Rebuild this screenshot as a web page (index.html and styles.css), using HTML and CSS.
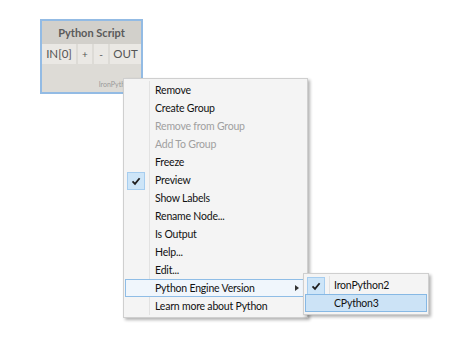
FILE: index.html
```html
<!doctype html>
<html>
<head>
  <link rel="stylesheet" href="styles.css">
</head>
<body>
  <div class="canvas">
    <div class="node">
      <div class="nodeTitle">Python Script</div>
      <div class="ports">
        <div class="port inPort">IN[0]</div>
        <div class="port btn">+</div>
        <div class="port btn">-</div>
        <div class="port outPort">OUT</div>
      </div>
      <div class="nodeFoot">IronPython2</div>
    </div>

    <div class="menu">
      <div class="gutterLine"></div>
      <div class="item">Remove</div>
      <div class="item">Create Group</div>
      <div class="item disabled">Remove from Group</div>
      <div class="item disabled">Add To Group</div>
      <div class="item">Freeze</div>
      <div class="item checked">
        <span class="check"><svg width="16" height="16" viewBox="0 0 16 16"><path d="M4.5 8.3 L7 10.8 L11.6 5.2" fill="none" stroke="#1f1f1f" stroke-width="1.8"/></svg></span>Preview
      </div>
      <div class="item">Show Labels</div>
      <div class="item">Rename Node...</div>
      <div class="item">Is Output</div>
      <div class="item">Help...</div>
      <div class="item">Edit...</div>
      <div class="item hover">Python Engine Version<span class="arrow"></span></div>
      <div class="item">Learn more about Python</div>
    </div>

    <div class="menu submenu">
      <div class="gutterLine"></div>
      <div class="item checked">
        <span class="check"><svg width="16" height="16" viewBox="0 0 16 16"><path d="M4.5 8.3 L7 10.8 L11.6 5.2" fill="none" stroke="#1f1f1f" stroke-width="1.8"/></svg></span>IronPython2
      </div>
      <div class="item selected">CPython3</div>
    </div>
  </div>
</body>
</html>
```

FILE: styles.css
```css
body{
  margin:0;
  background-color:#ffffff;
  font-family:Lato,"Noto Sans",sans-serif;
}
.canvas{
  position:relative;
  width:474px;
  height:339px;
  overflow:hidden;
}
.node{
  position:absolute;
  left:40px;
  top:19px;
  width:99px;
  height:71px;
  border:2px solid #93bbe4;
  background-color:#dddbd6;
  display:flex;
  flex-direction:column;
}
.nodeTitle{
  height:23px;
  line-height:23px;
  background-color:#d2d0cb;
  color:#5a5a5a;
  font-weight:bold;
  font-size:11px;
  text-align:center;
}
.ports{
  display:flex;
  gap:2px;
  height:20px;
}
.port{
  background-color:#eae8e4;
  color:#555555;
  font-size:11.5px;
  line-height:20px;
  text-align:center;
}
.inPort{
  width:34px;
}
.btn{
  width:14px;
  font-size:10px;
}
.outPort{
  flex:1;
}
.nodeFoot{
  margin-top:auto;
  padding:0 4px 4px 0;
  text-align:right;
  font-size:7px;
  color:#9a9a9a;
}
.menu{
  position:absolute;
  left:123px;
  top:78px;
  width:183px;
  padding:2px 0;
  background-color:#f4f4f4;
  border:1px solid #cfcfcf;
  box-shadow:2px 2px 3px rgba(0,0,0,0.3);
}
.gutterLine{
  position:absolute;
  left:25px;
  top:2px;
  bottom:2px;
  width:1px;
  background-color:#e2e2e2;
}
.item{
  position:relative;
  height:16px;
  line-height:16px;
  margin:0 1px;
  padding-left:29px;
  border:1px solid transparent;
  font-size:10.5px;
  letter-spacing:-0.2px;
  color:#111111;
}
.disabled{
  color:#a0a0a0;
}
.check{
  position:absolute;
  left:1px;
  top:0;
  width:16px;
  height:16px;
  background-color:#cde5f8;
  border:1px solid #a6cdef;
}
.check svg{
  display:block;
}
.hover{
  background-color:#f0f6fc;
  border-color:#8fbde6;
}
.arrow{
  position:absolute;
  right:6px;
  top:5px;
  border-left:4px solid #333333;
  border-top:3px solid transparent;
  border-bottom:3px solid transparent;
}
.submenu{
  left:303px;
  top:273px;
  width:124px;
}
.submenu .item{
  padding-left:28px;
}
.selected{
  background-color:#cce3f6;
  border-color:#86b8e4;
}
```
